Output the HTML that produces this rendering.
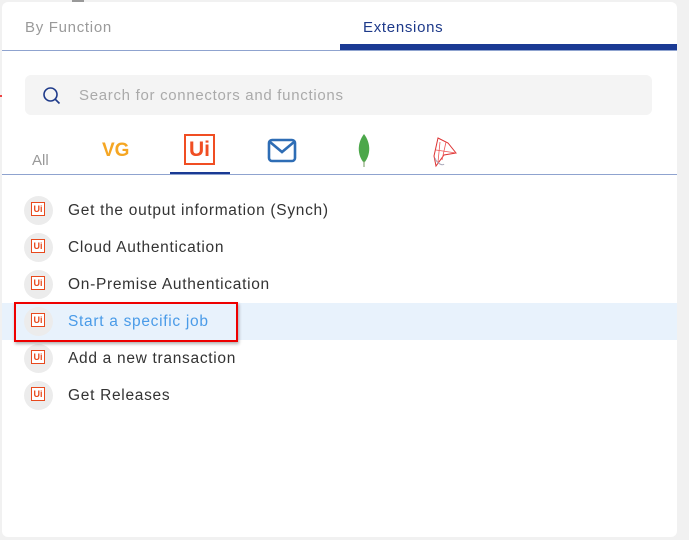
<!DOCTYPE html>
<html><head><style>
body{margin:0;width:689px;height:540px;background:#f1f1f1;font-family:"Liberation Sans",sans-serif;position:relative;overflow:hidden}
.p{position:absolute;left:2px;top:2px;width:675px;height:535px;background:#fff;border-radius:6px}
.a{position:absolute}
.ui{position:absolute;width:14px;height:14px;border:1.5px solid #e8491d;color:#e8491d;font-size:10px;font-weight:bold;line-height:14px;text-align:center;box-sizing:content-box}
.row{position:absolute;left:0;width:675px;height:37px}
.c{position:absolute;left:22px;top:4px;width:29px;height:29px;border-radius:50%;background:#ececec}
.c .ui{left:7px;top:6px;width:12px;height:12px;line-height:12px;font-size:9px;background:#fff}
.t{position:absolute;left:66px;top:10px;font-size:15.5px;color:#333;letter-spacing:0.7px}
</style></head><body>
<div class="a" style="left:72px;top:0;width:12px;height:3px;background:#999"></div>
<div class="p">
<div class="a" style="left:23px;top:17px;font-size:15px;color:#9a9a9a;letter-spacing:0.7px">By Function</div>
<div class="a" style="left:361px;top:17px;font-size:15px;color:#1e3a8a;letter-spacing:0.7px">Extensions</div>
<div class="a" style="left:0;top:48px;width:675px;height:1px;background:#8fa3cf"></div>
<div class="a" style="left:338px;top:42px;width:337px;height:6px;background:#1a3a94"></div>
<div class="a" style="left:23px;top:73px;width:627px;height:40px;background:#f4f4f4;border-radius:6px"></div>
<svg class="a" style="left:40px;top:84px" width="20" height="20"><circle cx="8.5" cy="8.5" r="6.5" fill="none" stroke="#1e3a8a" stroke-width="1.6"/><path d="M13 13l4.5 4.5" stroke="#1e3a8a" stroke-width="1.6"/></svg>
<div class="a" style="left:77px;top:85px;font-size:15px;color:#aaa;letter-spacing:0.7px">Search for connectors and functions</div>
<div class="a" style="left:30px;top:150px;font-size:15px;color:#999">All</div>
<div class="a" style="left:100px;top:138px;font-size:19px;font-weight:bold;color:#f5a623">VG</div>
<div class="a" style="left:182px;top:132px;width:27px;height:27px;border:2.5px solid #f04e23;color:#f04e23;font-size:21px;font-weight:bold;line-height:27px;text-align:center">Ui</div>
<div class="a" style="left:168px;top:170px;width:60px;height:3px;background:#1a3a94"></div>
<svg class="a" style="left:265px;top:136px" width="30" height="26"><rect x="2" y="2" width="26" height="21" rx="3" fill="none" stroke="#2e6db5" stroke-width="2.6"/><path d="M3 4l12 10 12-10" fill="none" stroke="#2e6db5" stroke-width="2.6"/></svg>
<svg class="a" style="left:352px;top:131px" width="20" height="36"><path d="M10 1C3 10 3 22 10 30 17 22 17 10 10 1z" fill="#4ca74a"/><path d="M10 28v6" stroke="#8a7" stroke-width="1.2"/></svg>
<svg class="a" style="left:428px;top:134px" width="34" height="32"><path d="M8 2l10 5 8 10-12 2-8 11-2-10z" fill="none" stroke="#d33" stroke-width="1"/><path d="M6 14l20 3M10 6l-2 20M16 6l-4 18" stroke="#e55" stroke-width=".8"/><path d="M5 22c2 6 8 8 9 6" fill="none" stroke="#aab" stroke-width="1"/></svg>
<div class="a" style="left:0;top:172px;width:675px;height:1px;background:#8fa3cf"></div>
<div class="row" style="top:190px"><div class="c"><div class="ui">Ui</div></div><div class="t">Get the output information (Synch)</div></div>
<div class="row" style="top:227px"><div class="c"><div class="ui">Ui</div></div><div class="t">Cloud Authentication</div></div>
<div class="row" style="top:264px"><div class="c"><div class="ui">Ui</div></div><div class="t">On-Premise Authentication</div></div>
<div class="row" style="top:301px;background:#e8f2fc"><div class="c"><div class="ui">Ui</div></div><div class="t" style="color:#4a9be8">Start a specific job</div></div>
<div class="row" style="top:338px"><div class="c"><div class="ui">Ui</div></div><div class="t">Add a new transaction</div></div>
<div class="row" style="top:375px"><div class="c"><div class="ui">Ui</div></div><div class="t">Get Releases</div></div>
<div class="a" style="left:12px;top:300px;width:220px;height:36px;border:2px solid #e00;box-shadow:1px 2px 3px rgba(0,0,0,.3)"></div>
</div>
<div class="a" style="left:0;top:95px;width:2px;height:2px;background:#e44"></div>
</body></html>
